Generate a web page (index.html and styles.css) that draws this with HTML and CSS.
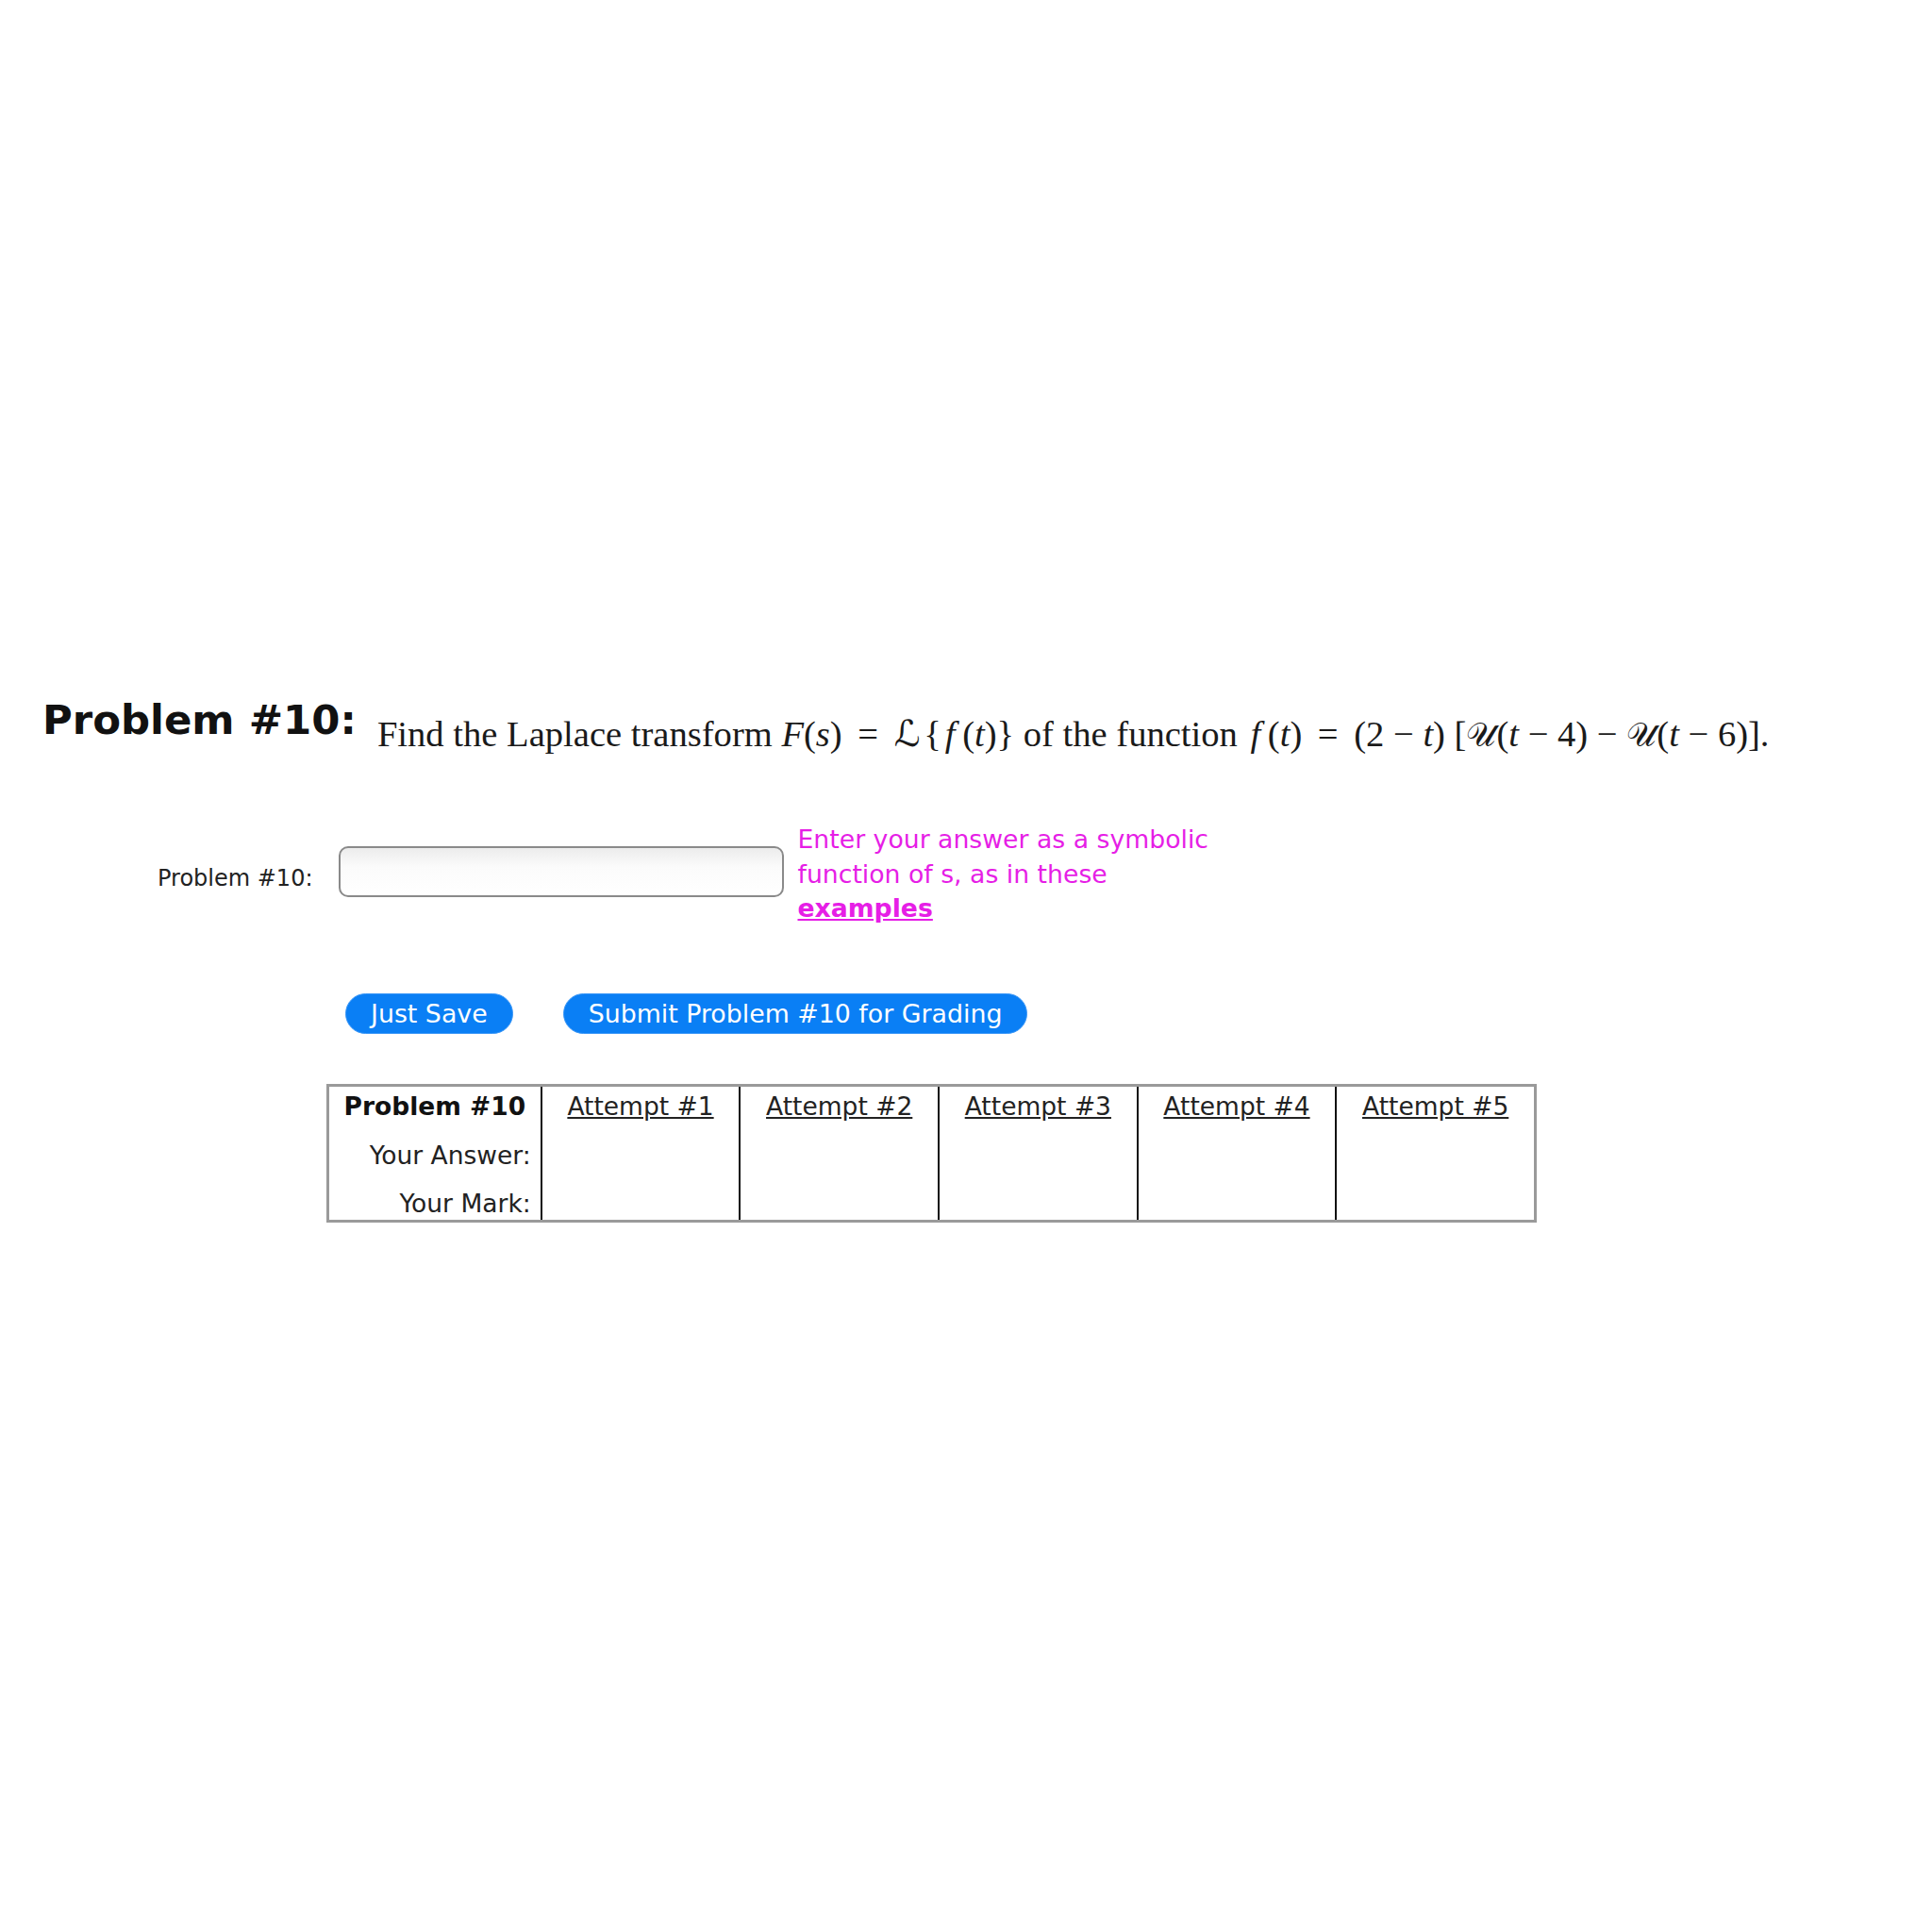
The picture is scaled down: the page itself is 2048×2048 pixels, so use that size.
FILE: index.html
```html
<!DOCTYPE html>
<html>
<head>
<meta charset="utf-8">
<title>Problem #10</title>
<link rel="stylesheet" href="styles.css">
</head>
<body>
<div class="page">
  <div class="title-row">
    <span class="prob-title">Problem #10:</span>
    <span class="math">Find the Laplace transform <i>F</i>(<i>s</i>)<span class="eq">=</span><span class="scr scr-l">ℒ</span>{<i class="fi">f</i>(<i>t</i>)} of the function <i class="fi">f</i>(<i>t</i>)<span class="eq">=</span>(2 − <i>t</i>) [<span class="scr scr-u">𝒰</span>(<i>t</i> − 4) − <span class="scr scr-u">𝒰</span>(<i>t</i> − 6)].</span>
  </div>

  <div class="answer-row">
    <label class="answer-label" for="ans">Problem #10:</label>
    <input class="answer-input" id="ans" type="text">
    <div class="hint">Enter your answer as a symbolic function of s, as in these <a class="hint-link" href="#">examples</a></div>
  </div>

  <div class="button-row">
    <button class="btn">Just Save</button>
    <button class="btn">Submit Problem #10 for Grading</button>
  </div>

  <table class="attempts">
    <tr>
      <th class="head-cell r1">Problem #10</th>
      <td class="att" rowspan="3"><a href="#">Attempt #1</a></td>
      <td class="att" rowspan="3"><a href="#">Attempt #2</a></td>
      <td class="att" rowspan="3"><a href="#">Attempt #3</a></td>
      <td class="att" rowspan="3"><a href="#">Attempt #4</a></td>
      <td class="att" rowspan="3"><a href="#">Attempt #5</a></td>
    </tr>
    <tr><td class="row-label r2">Your Answer:</td></tr>
    <tr><td class="row-label r3">Your Mark:</td></tr>
  </table>
</div>
</body>
</html>
```
FILE: styles.css
```css
html, body {
  margin: 0;
  padding: 0;
  background: #ffffff;
}
body {
  font-family: "DejaVu Sans", Verdana, sans-serif;
  color: #222222;
}
.page {
  padding-top: 737px;
}
.title-row {
  padding-left: 45px;
  height: 60px;
  white-space: nowrap;
}
.prob-title {
  font-family: "DejaVu Sans", sans-serif;
  font-weight: bold;
  font-size: 43.4px;
  line-height: 52px;
  color: #111111;
  margin-right: 17px;
}
.math {
  font-family: "Liberation Serif", "Times New Roman", serif;
  font-size: 38.6px;
  color: #1a1a1a;
  position: relative;
  top: 13px;
}
.math i {
  font-style: italic;
}
.math .fi {
  margin-left: 0.1em;
  margin-right: 0.2em;
}
.eq {
  margin: 0 0.43em;
}
.scr {
  font-family: "DejaVu Serif", "DejaVu Sans", serif;
  font-style: normal;
}
.scr-l {
  margin-right: 0.1em;
}
.scr-u {
  font-size: 0.9em;
}
.answer-row {
  display: flex;
  align-items: center;
  margin-top: 70px;
  padding-left: 167px;
}
.answer-label {
  font-size: 24px;
  color: #222222;
  margin-right: 28px;
  margin-top: 13px;
}
.answer-input {
  box-sizing: border-box;
  width: 472px;
  height: 54px;
  border: 2px solid #8a8a8a;
  border-radius: 10px;
  background: linear-gradient(#ececec, #fbfbfb 40%, #ffffff);
  margin: 0 14px 0 0;
  padding: 0 10px;
  font-size: 24px;
}
.hint {
  width: 460px;
  font-size: 26.7px;
  line-height: 36.6px;
  color: #e61ee6;
  margin-top: 5px;
}
.hint-link {
  color: #e61ee6;
  font-weight: bold;
  text-decoration: underline;
}
.button-row {
  display: flex;
  gap: 53px;
  margin-top: 71px;
  padding-left: 366px;
}
.btn {
  height: 43px;
  padding: 0 26px;
  border: 1px solid #3b97f7;
  border-radius: 22px;
  background: #0a7ff5;
  color: #ffffff;
  font-family: "DejaVu Sans", sans-serif;
  font-size: 26.8px;
  line-height: 41px;
}
.attempts {
  margin-top: 53px;
  margin-left: 346px;
  border-collapse: collapse;
  border: 3px solid #9a9a9a;
  width: 1283px;
  font-size: 26.5px;
}
.attempts th, .attempts td {
  padding-left: 10px;
  padding-right: 10px;
  line-height: 30px;
}
.head-cell {
  width: 205px;
  text-align: center;
  font-weight: bold;
  color: #111111;
}
.r1 {
  padding-top: 6px;
  padding-bottom: 11px;
}
.r2 {
  padding-top: 11px;
  padding-bottom: 6px;
}
.r3 {
  padding-top: 15px;
  padding-bottom: 2px;
}
.row-label {
  text-align: right;
  color: #222222;
}
.att {
  width: 190px;
  vertical-align: top;
  text-align: center;
  border-left: 2px solid #111111;
  padding-top: 6px;
}
.att a {
  color: #222222;
  text-decoration: underline;
}
```
